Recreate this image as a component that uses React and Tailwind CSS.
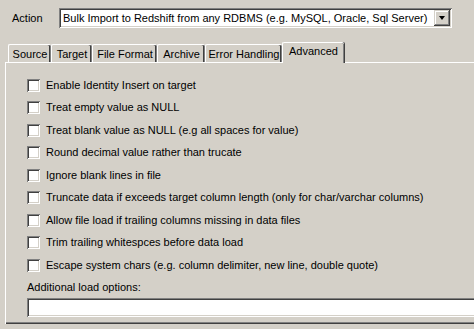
import React from 'react'

const SUNKEN =
  'shadow-[inset_1px_1px_0_#808080,inset_-1px_-1px_0_#ffffff,inset_2px_2px_0_#404040,inset_-2px_-2px_0_#d4d0c8]'
const RAISED =
  'shadow-[inset_-1px_-1px_0_#404040,inset_1px_1px_0_#d4d0c8,inset_-2px_-2px_0_#808080,inset_2px_2px_0_#ffffff]'

const TABS = [
  { label: 'Source', w: 'w-[43px]' },
  { label: 'Target', w: 'w-[41px]' },
  { label: 'File Format', w: 'w-[65px]' },
  { label: 'Archive', w: 'w-[48px]' },
  { label: 'Error Handling', w: 'w-[77px]' },
  { label: 'Advanced', w: 'w-[62px]', active: true },
]

const OPTIONS = [
  'Enable Identity Insert on target',
  'Treat empty value as NULL',
  'Treat blank value as NULL (e.g all spaces for value)',
  'Round decimal value rather than trucate',
  'Ignore blank lines in file',
  'Truncate data if exceeds target column length (only for char/varchar columns)',
  'Allow file load if trailing columns missing in data files',
  'Trim trailing whitespces before data load',
  'Escape system chars (e.g. column delimiter, new line, double quote)',
]

function Tab({ label, w, active }) {
  if (active) {
    return (
      <div
        className={`relative z-10 -mb-px flex h-[21px] ${w} items-start justify-center rounded-tl-[2px] rounded-tr-[2px] border-l border-t border-white bg-[#d4d0c8] pt-[2px] shadow-[inset_-1px_0_0_#808080,1px_0_0_#404040]`}
      >
        {label}
      </div>
    )
  }
  return (
    <div
      className={`flex h-[18px] ${w} items-start justify-center rounded-tl-[2px] rounded-tr-[2px] border-l border-t border-white pt-[3px] shadow-[inset_-1px_0_0_#808080,inset_-2px_0_0_#404040]`}
    >
      {label}
    </div>
  )
}

function Checkbox() {
  return <span className={`h-[13px] w-[13px] shrink-0 bg-white ${SUNKEN}`} />
}

export default function App() {
  return (
    <div className="relative h-[329px] w-[474px] overflow-hidden bg-[#d4d0c8] font-['Liberation_Sans',Arial,sans-serif] text-[11px] leading-[13px] text-black">
      {/* action row */}
      <div className="flex items-center pl-[12px] pt-[8px]">
        <span className="w-[47px]">Action</span>
        <div className={`flex h-[20px] w-[393px] items-center bg-white p-[2px] ${SUNKEN}`}>
          <span className="flex-1 truncate pl-[2px]">
            Bulk Import to Redshift from any RDBMS (e.g. MySQL, Oracle, Sql Server)
          </span>
          <span className={`flex h-[16px] w-[16px] items-center justify-center bg-[#d4d0c8] ${RAISED}`}>
            <span className="h-0 w-0 border-l-[3.5px] border-r-[3.5px] border-t-[4px] border-l-transparent border-r-transparent border-t-black" />
          </span>
        </div>
      </div>

      {/* tabs */}
      <div className="mt-[14px] flex items-end pl-[8px]">
        {TABS.map((t) => (
          <Tab key={t.label} {...t} />
        ))}
      </div>

      {/* panel */}
      <div className="ml-[5px] h-[262px] w-[480px] border-l border-t border-white shadow-[inset_0_-1px_0_#404040,inset_0_-2px_0_#808080]">
        <div className="flex flex-col pl-[21px] pt-[11px]">
          {OPTIONS.map((o) => (
            <div key={o} className="flex h-[22.5px] items-center gap-[6px]">
              <Checkbox />
              <span className="whitespace-nowrap">{o}</span>
            </div>
          ))}
          <div className="mt-[4px]">Additional load options:</div>
          <div className={`mt-[4px] h-[19px] w-[460px] bg-white ${SUNKEN}`} />
        </div>
      </div>
    </div>
  )
}
